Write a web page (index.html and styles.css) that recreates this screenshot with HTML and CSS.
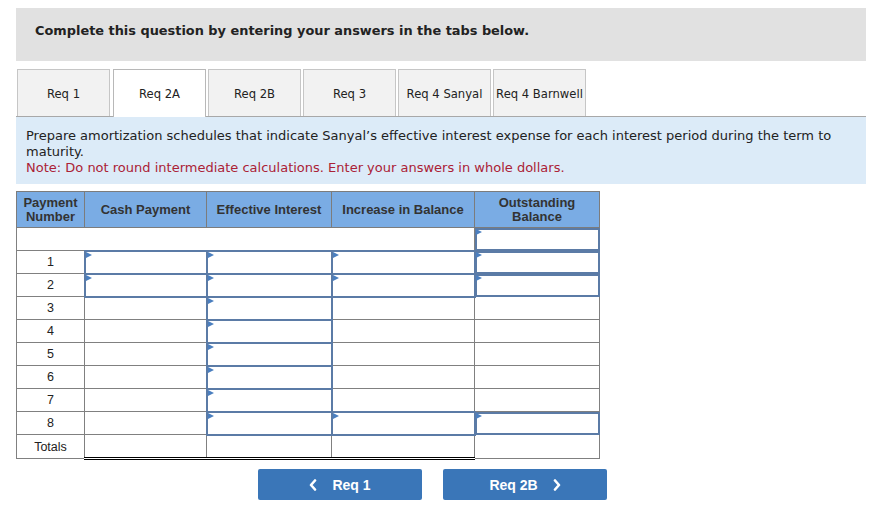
FILE: index.html
```
<!DOCTYPE html>
<html>
<head>
<meta charset="utf-8">
<link rel="stylesheet" href="styles.css">
</head>
<body>
<div class="page">
  <div class="banner">Complete this question by entering your answers in the tabs below.</div>
  <div class="tabs">
    <div class="tab">Req 1</div>
    <div class="tab active">Req 2A</div>
    <div class="tab">Req 2B</div>
    <div class="tab">Req 3</div>
    <div class="tab">Req 4 Sanyal</div>
    <div class="tab">Req 4 Barnwell</div>
  </div>
  <div class="instr">
    <p>Prepare amortization schedules that indicate Sanyal’s effective interest expense for each interest period during the term to maturity.</p>
    <p class="note">Note: Do not round intermediate calculations. Enter your answers in whole dollars.</p>
  </div>
  <table class="sched">
    <colgroup>
      <col class="c1"><col class="c2"><col class="c3"><col class="c4"><col class="c5">
    </colgroup>
    <thead>
      <tr>
        <th>Payment<br>Number</th>
        <th>Cash Payment</th>
        <th>Effective Interest</th>
        <th>Increase in Balance</th>
        <th>Outstanding<br>Balance</th>
      </tr>
    </thead>
    <tbody>
      <tr><td class="blank" colspan="4"></td><td class="in"></td></tr>
      <tr><td>1</td><td class="in"></td><td class="in"></td><td class="in"></td><td class="in"></td></tr>
      <tr><td>2</td><td class="in"></td><td class="in"></td><td class="in"></td><td class="in"></td></tr>
      <tr><td>3</td><td></td><td class="in"></td><td></td><td></td></tr>
      <tr><td>4</td><td></td><td class="in"></td><td></td><td></td></tr>
      <tr><td>5</td><td></td><td class="in"></td><td></td><td></td></tr>
      <tr><td>6</td><td></td><td class="in"></td><td></td><td></td></tr>
      <tr><td>7</td><td></td><td class="in"></td><td></td><td></td></tr>
      <tr><td>8</td><td></td><td class="in"></td><td class="in"></td><td class="in"></td></tr>
      <tr><td>Totals</td><td class="tot"></td><td class="tot"></td><td class="tot"></td><td></td></tr>
    </tbody>
  </table>
  <div class="nav">
    <button class="btn"><svg class="chev" width="8" height="12" viewBox="0 0 8 12"><polyline points="6,1.5 2,6 6,10.5" fill="none" stroke="#fff" stroke-width="2.6" stroke-linecap="round" stroke-linejoin="round"/></svg>Req 1</button>
    <button class="btn">Req 2B<svg class="chev right" width="8" height="12" viewBox="0 0 8 12"><polyline points="2,1.5 6,6 2,10.5" fill="none" stroke="#fff" stroke-width="2.6" stroke-linecap="round" stroke-linejoin="round"/></svg></button>
  </div>
</div>
</body>
</html>
```
FILE: styles.css
```
html, body {
  margin: 0;
  padding: 0;
  background: #fff;
}
body {
  font-family: "DejaVu Sans", Verdana, sans-serif;
  color: #222;
}
.page {
  padding: 8px 29px 0 16px;
}
.banner {
  background: #e1e1e1;
  height: 53px;
  box-sizing: border-box;
  padding: 15px 0 0 19px;
  font-weight: bold;
  font-size: 12.9px;
  color: #222;
}
.tabs {
  display: flex;
  gap: 2px;
  margin-top: 8px;
  padding-left: 1px;
  border-bottom: 1px solid #a8a8a8;
  height: 47px;
}
.tab {
  width: 93px;
  box-sizing: border-box;
  border: 1px solid #c6c6c6;
  border-bottom: none;
  background: #f2f2f2;
  font-size: 11.6px;
  color: #222;
  display: flex;
  align-items: center;
  justify-content: center;
  white-space: nowrap;
  padding-top: 2px;
}
.tab.active {
  background: #fff;
  border-color: #b8b8b8;
  height: 48px;
  padding-bottom: 1px;
  margin-bottom: -1px;
  margin-left: 1px;
}
.instr {
  background: #dcebf8;
  height: 67px;
  box-sizing: border-box;
  padding: 11px 10px 0 10px;
  font-size: 13px;
  line-height: 16px;
  color: #222;
}
.instr p {
  margin: 0;
}
.instr .note {
  color: #ab2236;
}
.sched {
  margin-top: 7px;
  border-collapse: collapse;
  font-family: "Liberation Sans", Arial, sans-serif;
  font-size: 12.5px;
  color: #222;
}
col.c1 { width: 68px; }
col.c2 { width: 122px; }
col.c3 { width: 125px; }
col.c4 { width: 143px; }
col.c5 { width: 125px; }
.sched th {
  background: #7aace4;
  border: 1px solid #7c7c7c;
  height: 35px;
  padding: 0;
  font-weight: bold;
  font-size: 13px;
  line-height: 14px;
  color: #333;
}
.sched td {
  border: 1px solid #808080;
  height: 22px;
  padding: 0;
  text-align: center;
  position: relative;
}
.sched td.in {
  outline: 2px solid #5b7ba6;
  outline-offset: -1px;
}
.sched td.in:last-child {
  outline-offset: -2px;
}
.sched td.in::before {
  content: "";
  position: absolute;
  left: 1px;
  top: 1px;
  border-left: 6px solid #4b7fbf;
  border-top: 3px solid transparent;
  border-bottom: 3px solid transparent;
}
.sched td.tot {
  border-top: 1px solid #000;
  border-bottom: 3px double #000;
}
.nav {
  display: flex;
  gap: 21px;
  margin: 9px 0 0 242px;
}
.btn {
  width: 164px;
  height: 31px;
  background: #3a76b8;
  border: none;
  border-radius: 2px;
  color: #fff;
  font-family: "Liberation Sans", Arial, sans-serif;
  font-weight: bold;
  font-size: 14px;
  display: flex;
  align-items: center;
  justify-content: center;
  padding: 0;
}
.chev {
  margin-right: 15px;
}
.chev.right {
  margin-right: 0;
  margin-left: 15px;
}
```
